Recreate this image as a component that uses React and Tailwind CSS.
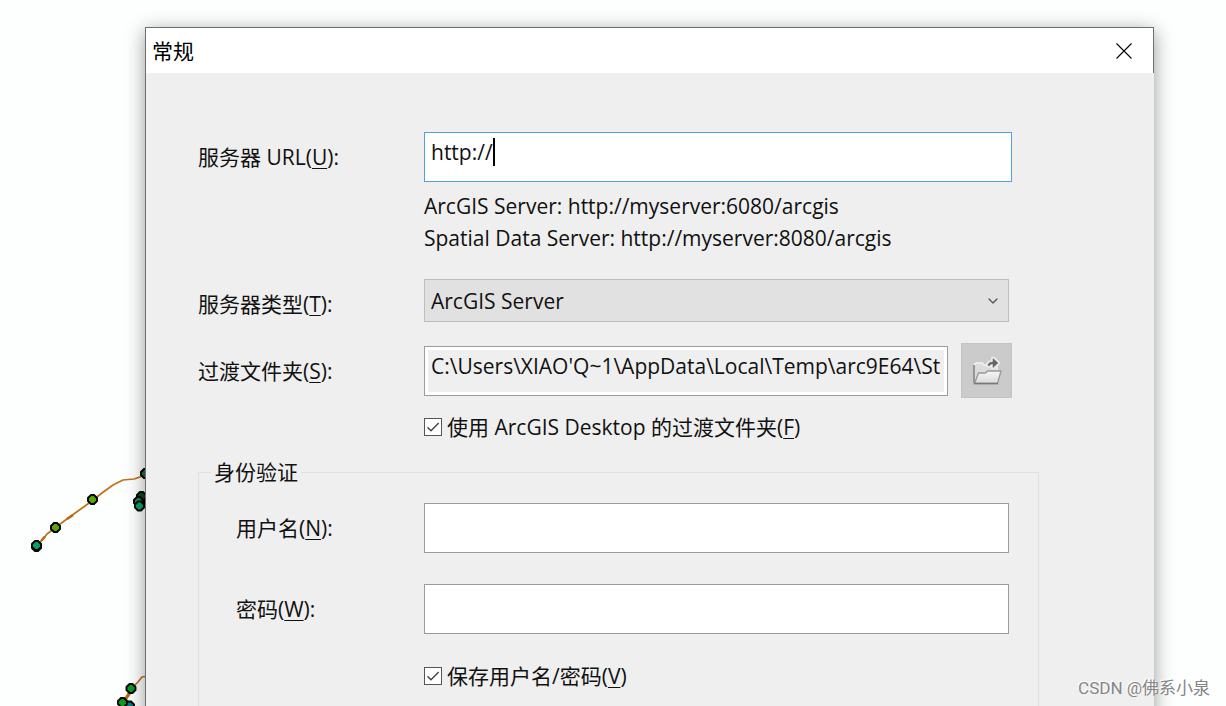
import { useState } from 'react';
import { ChevronDown } from 'lucide-react';

const fieldBorder = 'border border-[#9b9b9b] bg-white';

function Key({ children }) {
  return <u className="decoration-1 underline-offset-3">{children}</u>;
}

function Check({ id, checked, onChange, children }) {
  return (
    <div className="flex items-center gap-[5px] leading-8">
      <span className="relative flex">
        <input
          id={id}
          type="checkbox"
          checked={checked}
          onChange={(e) => onChange(e.target.checked)}
          className="peer size-[18px] appearance-none border border-[#555] bg-white"
        />
        <svg
          viewBox="0 0 18 18"
          className="pointer-events-none absolute inset-0 hidden size-[18px] peer-checked:block"
          fill="none"
          stroke="#444"
          strokeWidth="1.4"
        >
          <path d="M3.5 9.2 7 12.7 14.7 5" />
        </svg>
      </span>
      <label htmlFor={id}>{children}</label>
    </div>
  );
}

function Marker({ x, y, fill }) {
  return (
    <path
      transform={`translate(${x} ${y})`}
      d="M-1.5-4.5H1.5L4.5-1.5V1.5L1.5 4.5H-1.5L-4.5 1.5V-1.5Z"
      fill={fill}
      stroke="#000"
      strokeWidth="1.9"
    />
  );
}

// layer features visible on the map behind the dialog
function MapLayer() {
  return (
    <svg className="absolute top-0 left-0 h-[706px] w-[160px]" viewBox="0 0 160 706">
      <g fill="none" stroke="#c07018" strokeWidth="1.7" strokeLinejoin="round">
        <path d="M37 546 43 539 47 534 56 527 71 516 85 506 93 500 102 493 113 485 123 480 134 479 140 477 148 473" />
        <path d="M122 705 126 697 131 689 138 682 142 677 148 676" />
      </g>
      <path d="M41 541 45 536.5M67 519 73 515M126 699 130 693" stroke="#b86a14" strokeWidth="2.5" />
      <Marker x={36.5} y={546.5} fill="#000" />
      <Marker x={36.5} y={545.5} fill="#00a272" />
      <Marker x={55.5} y={527.5} fill="#5ba600" />
      <Marker x={92.5} y={499.5} fill="#5ba600" />
      <Marker x={145.5} y={473.5} fill="#147a3c" />
      <Marker x={144} y={502} fill="#000" />
      <Marker x={141.5} y={496.5} fill="#064d18" />
      <Marker x={138.5} y={501.5} fill="#0b9068" />
      <Marker x={139.5} y={506} fill="#00a272" />
      <Marker x={129.5} y={706} fill="#007f80" />
      <Marker x={122.5} y={702.5} fill="#0b9a20" />
      <Marker x={131} y={688.5} fill="#0b9a20" />
    </svg>
  );
}

function FolderIcon() {
  return (
    <svg viewBox="0 0 30 30" className="size-[30px]">
      <defs>
        <linearGradient id="folder" x1="0" y1="0" x2="0" y2="1">
          <stop offset="0" stopColor="#f6f6f6" />
          <stop offset="1" stopColor="#dadada" />
        </linearGradient>
      </defs>
      <path d="M2 27V9l2-2h6l2 2h13v6" fill="#dcdcdc" stroke="#f4f4f4" strokeWidth="1.5" />
      <path d="M2 9v18" stroke="#777" strokeWidth="1.5" />
      <path d="M2.5 27.5 6.500 17h7l2-2H29L25.5 27.5Z" fill="url(#folder)" stroke="#999" strokeWidth="1.3" />
      <path d="M2 27.5H26" stroke="#777" strokeWidth="1.5" />
      <path d="M16 9.5C16 7 18 6 21 6V2.500L26 7l-5 4.500V8C19 8 18 8.500 17 10Z" fill="#777" stroke="#ededed" strokeWidth="4" strokeLinejoin="round" />
      <path d="M16 9.5C16 7 18 6 21 6V2.500L26 7l-5 4.500V8C19 8 18 8.500 17 10Z" fill="#666" stroke="#666" strokeWidth=".5" />
    </svg>
  );
}

export default function App() {
  const [url, setUrl] = useState('http://');
  const [useDesktop, setUseDesktop] = useState(true);
  const [save, setSave] = useState(true);
  const [user, setUser] = useState('');
  const [password, setPassword] = useState('');

  return (
    <div className="relative h-screen overflow-hidden bg-[#fdfefe] pt-[27px] pr-[72px] pl-[145px] font-['Open_Sans','Noto_Sans_CJK_SC',sans-serif] text-[21px] leading-8 text-[#111]">
      <MapLayer />

      <div role="dialog" aria-labelledby="title" className="relative min-h-[760px] border-t border-l border-[#6e6e6e] bg-[#efefef] shadow-[0_4px_18px_rgba(0,0,0,0.4)]">
        <header className="flex h-[45px] items-center justify-between border-r border-[#6e6e6e] bg-white pr-[21px] pl-[6px]">
          <h1 id="title" className="text-black">常规</h1>
          <button type="button" aria-label="关闭" className="text-black">
            <svg viewBox="0 0 16 16" className="size-4" stroke="currentColor" strokeWidth="1.1">
              <path d="M.5.5 15.5 15.5M15.5.5.5 15.5" />
            </svg>
          </button>
        </header>

        <form className="pt-[59px] pr-[115px] pl-[52px]">
          <div className="grid grid-cols-[226px_1fr]">
            <label htmlFor="url" className="pt-[9px]">服务器 URL(<Key>U</Key>):</label>
            <div className="mr-[27px]">
              <div className="flex h-[50px] items-center border border-[#569de5] bg-white px-[6px] pb-[10px]">
                <input
                  id="url"
                  value={url}
                  onChange={(e) => setUrl(e.target.value)}
                  className="field-sizing-content outline-none"
                />
                <span className="h-7 w-[2px] bg-black" />
              </div>
              <p className="mt-2">ArcGIS Server: http://myserver:6080/arcgis</p>
              <p>Spatial Data Server: http://myserver:8080/arcgis</p>
            </div>
          </div>

          <div className="mt-[25px] grid grid-cols-[226px_1fr]">
            <label htmlFor="type" className="pt-[9px]">服务器类型(<Key>T</Key>):</label>
            <div className="relative mr-[30px]">
              <select id="type" className="h-[43px] w-full appearance-none border border-[#bdbdbd] bg-[#e1e1e1] px-[6px]">
                <option>ArcGIS Server</option>
                <option>Spatial Data Server</option>
              </select>
              <ChevronDown size={16} color="#555" strokeWidth={2} className="pointer-events-none absolute top-[14px] right-2" />
            </div>
          </div>

          <div className="mt-[21px] grid grid-cols-[226px_1fr] items-center">
            <label htmlFor="folder-path">过渡文件夹(<Key>S</Key>):</label>
            <div className="mr-[27px] flex items-center gap-[13px]">
              <div className={`h-[50px] min-w-0 flex-1 p-[3px] ${fieldBorder}`}>
                <input
                  id="folder-path"
                  readOnly
                  value="C:\Users\XIAO'Q~1\AppData\Local\Temp\arc9E64\St"
                  className="h-full w-full bg-[#efefef] pb-[10px] pl-[3px] outline-none"
                />
              </div>
              <button type="button" aria-label="浏览" className="flex h-[55px] w-[51px] items-center justify-center border border-[#c3c3c3] bg-[#cbcbcb]">
                <FolderIcon />
              </button>
            </div>
          </div>

          <div className="mt-[13px] pl-[226px]">
            <Check id="desktop" checked={useDesktop} onChange={setUseDesktop}>
              使用 ArcGIS Desktop 的过渡文件夹(<Key>F</Key>)
            </Check>
          </div>

          <fieldset className="mt-[13px] border border-[#e0e0e0] pr-[29px] pb-10 pl-[37px]">
            <legend className="-ml-[25px] px-[3px]">身份验证</legend>
            <div className="mt-[15px] grid grid-cols-[188px_1fr] items-center gap-y-[31px]">
              <label htmlFor="user">用户名(<Key>N</Key>):</label>
              <input id="user" value={user} onChange={(e) => setUser(e.target.value)} className={`h-[50px] min-w-0 px-[6px] outline-none ${fieldBorder}`} />
              <label htmlFor="password">密码(<Key>W</Key>):</label>
              <input id="password" type="password" value={password} onChange={(e) => setPassword(e.target.value)} className={`h-[50px] min-w-0 px-[6px] outline-none ${fieldBorder}`} />
            </div>
            <div className="mt-[26px] pl-[188px]">
              <Check id="save" checked={save} onChange={setSave}>
                保存用户名/密码(<Key>V</Key>)
              </Check>
            </div>
          </fieldset>
        </form>
      </div>

      <span className="absolute right-4 bottom-1 font-['Roboto','Noto_Sans_CJK_SC',sans-serif] text-[17px] leading-7 text-[#858585] [text-shadow:-1px_-1px_0_#fff]">
        CSDN @佛系小泉
      </span>
    </div>
  );
}
